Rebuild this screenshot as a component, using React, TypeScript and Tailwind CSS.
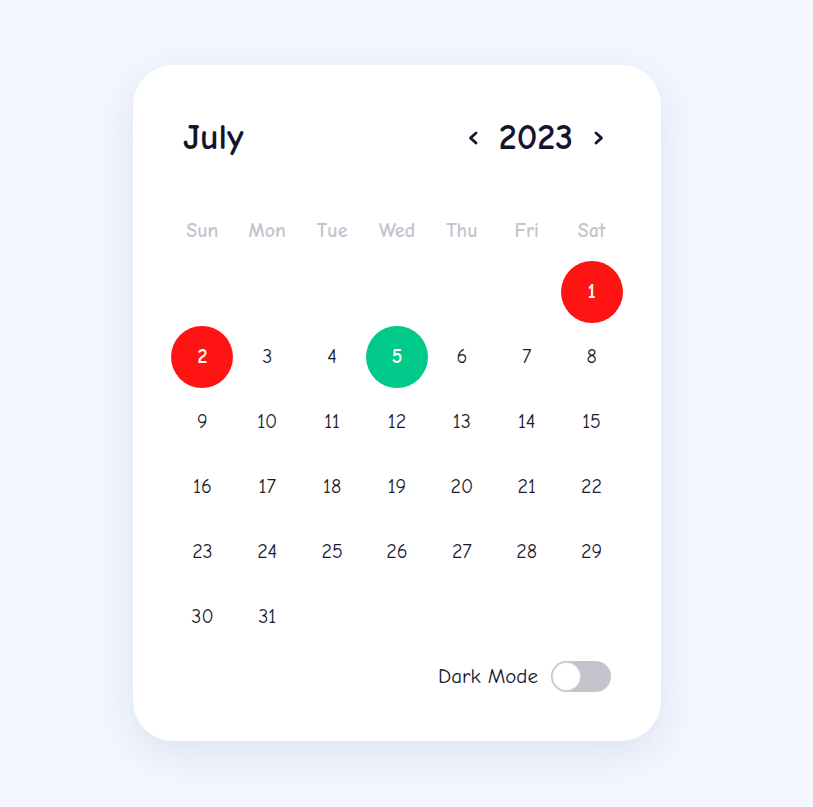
import { useState } from 'react';

const weekDays = ['Sun', 'Mon', 'Tue', 'Wed', 'Thu', 'Fri', 'Sat'];

// July 2023 starts on a Saturday
const cells: (number | null)[] = [
    null, null, null, null, null, null,
    ...Array.from({ length: 31 }, (_, i) => i + 1),
];

const highlight: Record<number, string> = {
    1: 'bg-[#ff1414] text-white font-bold',
    2: 'bg-[#ff1414] text-white font-bold',
    5: 'bg-[#00c98a] text-white font-bold',
};

const font = { fontFamily: '"Comic Sans MS", "Comic Neue", "Open Sans", sans-serif' };

const Chevron = ({ dir }: { dir: 'left' | 'right' }) => (
    <svg width="12" height="16" viewBox="0 0 12 16" fill="none">
        <path
            d={dir === 'left' ? 'M9 3 L3.5 8 L9 13' : 'M3 3 L8.5 8 L3 13'}
            stroke="#14142b"
            strokeWidth="2.8"
            strokeLinecap="round"
            strokeLinejoin="round"
        />
    </svg>
);

export default function App() {
    const [dark, setDark] = useState(false);

    return (
        <div className="min-h-screen w-full bg-[#f4f7ff] flex justify-center pt-[65px] pr-[19px]" style={font}>
            <div className="w-[528px] h-[676px] bg-white rounded-[40px] shadow-[0_12px_40px_rgba(170,185,215,0.35)] px-[37px] pt-[53px]">
                {/* Header */}
                <div className="flex items-center justify-between h-[40px] pl-[13px] pr-[19px]">
                    <h1 className="text-[36px] font-bold text-[#14142b] leading-none">July</h1>
                    <div className="flex items-center">
                        <button className="flex items-center justify-center w-[12px]">
                            <Chevron dir="left" />
                        </button>
                        <span className="text-[36px] font-bold text-[#14142b] leading-none mx-[20px]">2023</span>
                        <button className="flex items-center justify-center w-[12px]">
                            <Chevron dir="right" />
                        </button>
                    </div>
                </div>

                {/* Week day names */}
                <div className="grid grid-cols-7 mt-[53px] h-[40px] items-center">
                    {weekDays.map((d) => (
                        <div key={d} className="text-center text-[20px] font-extrabold text-[#c5c4cc]">
                            {d}
                        </div>
                    ))}
                </div>

                {/* Days */}
                <div className="grid grid-cols-7 mt-[8px]">
                    {cells.map((day, i) => (
                        <div key={i} className="h-[65px] flex items-center justify-center">
                            {day && (
                                <div
                                    className={`w-[62px] h-[62px] rounded-full flex items-center justify-center text-[20px] ${
                                        highlight[day] ?? 'text-[#1a1a2e]'
                                    }`}
                                >
                                    {day}
                                </div>
                            )}
                        </div>
                    ))}
                </div>

                {/* Dark mode toggle */}
                <div className="flex items-center justify-end gap-[13px] mt-[12px] pr-[13px]">
                    <span className="text-[21px] text-[#14142b]">Dark Mode</span>
                    <button
                        onClick={() => setDark(!dark)}
                        className="w-[60px] h-[31px] rounded-full bg-[#c4c3cb] p-[2px] flex items-center"
                    >
                        <span className="w-[27px] h-[27px] rounded-full bg-white block shadow-[0_0_0_1px_#d6d5db]" />
                    </button>
                </div>
            </div>
        </div>
    );
}
